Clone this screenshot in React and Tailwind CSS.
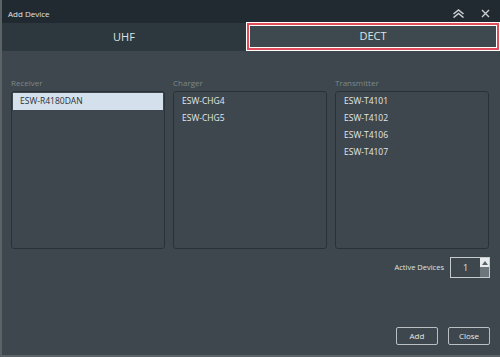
import React from 'react';

const columns = [
  { label: 'Receiver', items: ['ESW-R4180DAN'], selected: 0 },
  { label: 'Charger', items: ['ESW-CHG4', 'ESW-CHG5'] },
  { label: 'Transmitter', items: ['ESW-T4101', 'ESW-T4102', 'ESW-T4106', 'ESW-T4107'] },
];

const DeviceList = ({ label, items, selected }) => (
  <div className="flex flex-col w-[154px]">
    <span className="text-[8px] leading-[10px] text-[#7d878c] mb-[3px]">{label}</span>
    <div className="h-[158px] rounded-[3px] border border-[#2a3237] p-px flex flex-col">
      {items.map((item, i) => (
        <div
          key={item}
          className={`h-[17px] pl-[7px] flex items-center text-[8.5px] ${
            i === selected ? 'bg-[#d4e0ec] text-[#2a3237]' : 'text-[#e4e8ea]'
          }`}
        >
          {item}
        </div>
      ))}
    </div>
  </div>
);

export default function App() {
  return (
    <div
      className="w-[500px] h-[357px] flex flex-col bg-[#3d474d] border-l-2 border-b-2 border-[#5b6367]"
      style={{ fontFamily: '"Open Sans", "Noto Sans", sans-serif' }}
    >
      {/* Title bar */}
      <div className="h-[22px] flex items-end pb-[2px] justify-between bg-[#222a31] pl-[6px] pr-[10px]">
        <span className="text-[8px] leading-[12px] text-[#e0e4e6]">Add Device</span>
        <div className="flex items-center gap-[16px] text-[#c9ced1] pb-[2px]">
          <svg width="13" height="9" viewBox="0 0 13 9" fill="none" stroke="currentColor" strokeWidth="1.6">
            <path d="M1.5 5 L6.5 1 L11.5 5" />
            <path d="M1.5 8.5 L6.5 4.5 L11.5 8.5" />
          </svg>
          <svg width="9" height="9" viewBox="0 0 9 9" fill="none" stroke="currentColor" strokeWidth="1.4">
            <path d="M1 1 L8 8 M8 1 L1 8" />
          </svg>
        </div>
      </div>

      {/* Tabs */}
      <div className="h-[29px] flex bg-[#222a31]">
        <div className="w-[244px] mt-[1px] flex items-center justify-center bg-[#2d373e] text-[11px] text-[#dfe3e5]">
          UHF
        </div>
        <div className="flex-1 border border-white">
          <div className="h-full border-2 border-[#e24d5c]">
            <div className="h-full border border-white bg-[#3e494f] flex items-center justify-center text-[11px] text-[#dfe3e5]">
              DECT
            </div>
          </div>
        </div>
      </div>

      {/* Content */}
      <div className="flex-1 flex flex-col px-[9px] pt-[27px] pb-[10px]">
        <div className="flex gap-[8px]">
          {columns.map((c) => (
            <DeviceList key={c.label} {...c} />
          ))}
        </div>

        <div className="flex items-center justify-end mt-[8px] gap-[6px] pr-[1px]">
          <span className="text-[7.5px] text-[#dfe3e5]">Active Devices</span>
          <div className="w-[40px] h-[21px] border border-[#c6cbce] flex">
            <span className="flex-1 flex items-center justify-center text-[9px] text-[#dfe3e5]">1</span>
            <div className="w-[9px] flex flex-col">
              <div className="h-[9px] bg-[#e8ebed] flex items-center justify-center">
                <svg width="6" height="4" viewBox="0 0 6 4">
                  <path d="M0 4 L3 0 L6 4 Z" fill="#5b6367" />
                </svg>
              </div>
              <div className="flex-1 bg-[#6d767b]" />
            </div>
          </div>
        </div>

        <div className="flex-1" />

        <div className="flex justify-end gap-[10px] pr-[1px]">
          <button className="w-[42px] h-[18px] border border-[#b9bfc2] rounded-[2px] text-[8px] text-[#e4e8ea]">
            Add
          </button>
          <button className="w-[42px] h-[18px] border border-[#b9bfc2] rounded-[2px] text-[8px] text-[#e4e8ea]">
            Close
          </button>
        </div>
      </div>
    </div>
  );
}
